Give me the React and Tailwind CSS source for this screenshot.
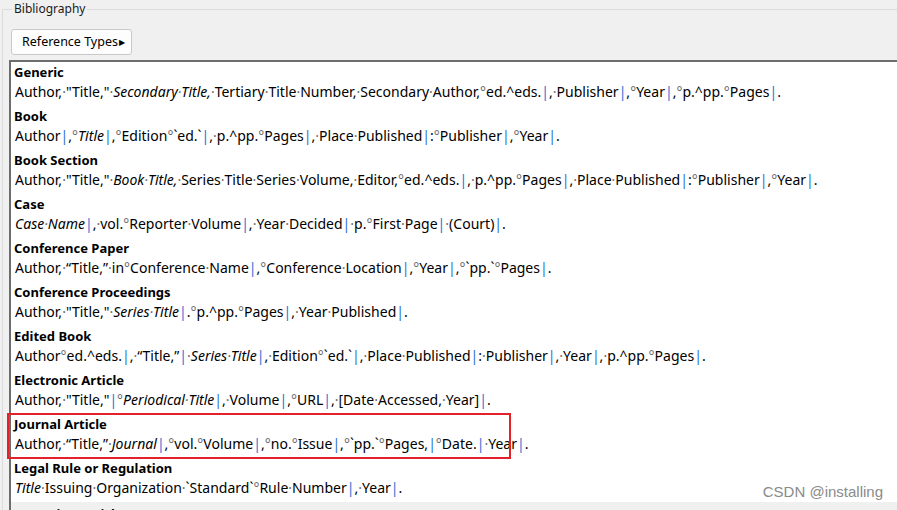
const entries = [
  {
    name: "Generic",
    body: 'Author,·"Title,"·_Secondary·Title,_·Tertiary·Title·Number,·Secondary·Author,°ed.^eds.|,·Publisher|,°Year|,°p.^pp.°Pages|.',
  },
  {
    name: "Book",
    body: "Author|,°_Title_|,°Edition°`ed.`|,·p.^pp.°Pages|,·Place·Published|:°Publisher|,°Year|.",
  },
  {
    name: "Book Section",
    body: 'Author,·"Title,"·_Book·Title,_·Series·Title·Series·Volume,·Editor,°ed.^eds.|,·p.^pp.°Pages|,·Place·Published|:°Publisher|,°Year|.',
  },
  {
    name: "Case",
    body: "_Case·Name_|,·vol.°Reporter·Volume|,·Year·Decided|·p.°First·Page|·(Court)|.",
  },
  {
    name: "Conference Paper",
    body: "Author,·“Title,”·in°Conference·Name|,°Conference·Location|,°Year|,°`pp.`°Pages|.",
  },
  {
    name: "Conference Proceedings",
    body: 'Author,·"Title,"·_Series·Title_|.°p.^pp.°Pages|,·Year·Published|.',
  },
  {
    name: "Edited Book",
    body: "Author°ed.^eds.|,·“Title,”|·_Series·Title_|,·Edition°`ed.`|,·Place·Published|:·Publisher|,·Year|,·p.^pp.°Pages|.",
  },
  {
    name: "Electronic Article",
    body: 'Author,·"Title,"|°_Periodical·Title_|,·Volume|,°URL|,·[Date·Accessed,·Year]|.',
  },
  {
    name: "Journal Article",
    body: "Author,·“Title,”·_Journal_|,°vol.°Volume|,°no.°Issue|,°`pp.`°Pages,|°Date.|·Year|.",
    marked: true,
  },
  {
    name: "Legal Rule or Regulation",
    body: "_Title_·Issuing·Organization·`Standard`°Rule·Number|,·Year|.",
  },
];

function Chars({ text }) {
  return text.split("").map((c, i) => {
    if (c === "|") return <span key={i} className="text-[#2a6fd6]">|</span>;
    if (c === "·" || c === "°") return <span key={i} className="text-[#6b6b6b]">{c}</span>;
    return c;
  });
}

function Body({ text }) {
  const parts = text.split("_");
  return (
    <div className="h-[24px] leading-[20px] text-[14px] whitespace-nowrap pl-[3px]">
      {parts.map((p, i) =>
        i % 2 === 1 ? (
          <i key={i}>
            <Chars text={p} />
          </i>
        ) : (
          <span key={i}>
            <Chars text={p} />
          </span>
        )
      )}
    </div>
  );
}

export default function App() {
  return (
    <div
      className="w-[897px] h-[510px] overflow-hidden bg-[#f0f0f0] text-black relative"
      style={{ fontFamily: '"Noto Sans", "Open Sans", sans-serif' }}
    >
      {/* group box */}
      <div className="relative mt-[9px] ml-[2px] border-t border-l border-[#dcdcdc] h-[520px]">
        <span className="absolute -top-[9px] left-[9px] px-[2px] bg-[#f0f0f0] text-[12px] leading-[16px] text-[#1a1a1a]">
          Bibliography
        </span>

        <div className="pt-[19px] pl-[8px]">
          <button className="h-[26px] w-[121px] rounded-[3px] border border-[#c9c9c9] bg-[#fdfdfd] text-[12.5px] flex items-center pl-[10px]">
            Reference Types
            <span className="text-[8px] ml-[1px]">▶</span>
          </button>
        </div>

        {/* text box */}
        <div className="mt-[5px] ml-[6px] border-t-2 border-l-2 border-[#6d6d6d] bg-white pl-[1px]">
          {entries.map((e) => (
            <div key={e.name} className="relative">
              {e.marked && (
                <div className="absolute top-[-1px] left-[-5px] w-[504px] h-[46px] border-2 border-[#e4202b] pointer-events-none" />
              )}
              <div className="h-[20px] leading-[20px] text-[13px] font-bold pl-[2px]">{e.name}</div>
              <Body text={e.body} />
            </div>
          ))}
          <div className="bg-[#f0f0f0] -ml-[1px] pl-[3px] h-[30px] pt-[2px]">
            <div className="leading-[20px] text-[13px] font-bold">Magazine Article</div>
          </div>
        </div>
      </div>

      <div
        className="absolute right-[14px] top-[481px] text-[15px] text-[#8a8a8a]"
        style={{ fontFamily: '"Liberation Sans", Arial, sans-serif' }}
      >
        CSDN @installing
      </div>
    </div>
  );
}
